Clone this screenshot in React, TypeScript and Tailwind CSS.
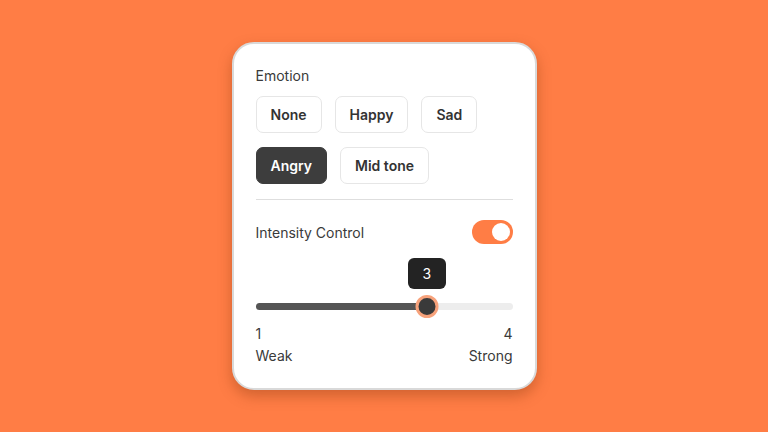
import React from 'react';

const emotions = [
  ['None', 'Happy', 'Sad'],
  ['Angry', 'Mid tone'],
];

export default function App() {
  const value = 3;
  const pct = ((value - 1) / 3) * 100;

  return (
    <div
      className="flex h-screen w-full items-center justify-center bg-[#ff7d45]"
      style={{ fontFamily: 'Inter, "Noto Sans", sans-serif' }}
    >
      <div className="w-[305px] rounded-[22px] border-2 border-[#d9d9d9] bg-white px-[22px] pb-[22px] pt-[22px] shadow-[0_6px_14px_rgba(120,50,10,0.35)]">
        <div className="text-[14px] leading-5 text-[#3a3a3a]">Emotion</div>

        <div className="mt-[10px] flex flex-col gap-[14px]">
          {emotions.map((row, i) => (
            <div key={i} className="flex gap-[13px]">
              {row.map((label) => {
                const active = label === 'Angry';
                return (
                  <button
                    key={label}
                    className={
                      active
                        ? 'h-[37px] rounded-[7px] border border-[#3d3d3d] bg-[#3d3d3d] px-[14px] text-[14px] font-semibold text-white'
                        : 'h-[37px] rounded-[7px] border border-[#e6e6e6] bg-white px-[14px] text-[14px] font-semibold text-[#333]'
                    }
                  >
                    {label}
                  </button>
                );
              })}
            </div>
          ))}
        </div>

        <div className="mt-[15px] h-px bg-[#dedede]" />

        <div className="mt-[20px] flex items-center justify-between">
          <span className="text-[14px] text-[#3a3a3a]">Intensity Control</span>
          <div className="flex h-[24px] w-[41px] items-center justify-end rounded-full bg-[#ff7d45] p-[3px]">
            <div className="h-[18px] w-[18px] rounded-full bg-white" />
          </div>
        </div>

        <div className="relative mt-[14px] h-[60px]">
          <div
            className="absolute top-0 flex h-[31px] w-[38px] -translate-x-1/2 items-center justify-center rounded-[6px] bg-[#232323] text-[14px] text-white"
            style={{ left: `${pct}%` }}
          >
            {value}
          </div>
          <div className="absolute left-0 right-0 top-[45px] h-[7px] rounded-full bg-[#ededed]">
            <div className="h-full rounded-full bg-[#555]" style={{ width: `${pct}%` }} />
          </div>
          <div
            className="absolute top-[37px] h-[23px] w-[23px] -translate-x-1/2 rounded-full border-[3px] border-[#f7a27b] bg-[#3a3a3a]"
            style={{ left: `${pct}%` }}
          />
        </div>

        <div className="mt-[6px] flex justify-between text-[14px] leading-5 text-[#3a3a3a]">
          <span>1</span>
          <span>4</span>
        </div>
        <div className="mt-[2px] flex justify-between text-[14px] leading-5 text-[#3a3a3a]">
          <span>Weak</span>
          <span>Strong</span>
        </div>
      </div>
    </div>
  );
}
